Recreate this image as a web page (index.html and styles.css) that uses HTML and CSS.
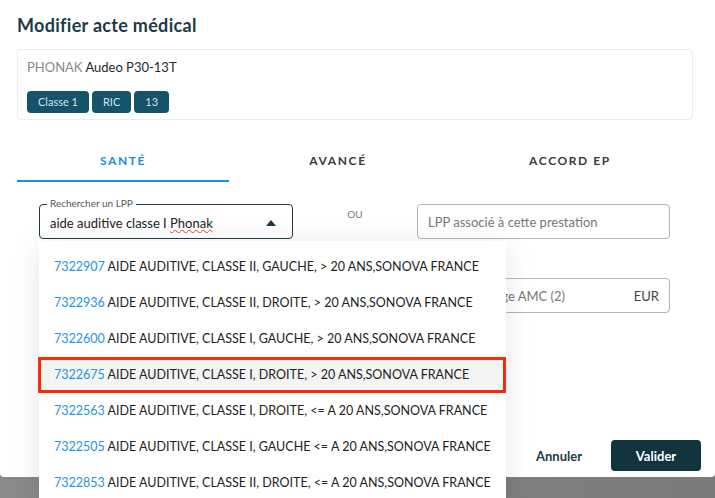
FILE: index.html
```html
<!DOCTYPE html>
<html lang="fr">
<head>
    <meta charset="UTF-8">
    <meta name="viewport" content="width=device-width, initial-scale=1.0">
    <title>Modifier acte médical</title>
    <link rel="stylesheet" href="styles.css">
</head>
<body>
    <div class="modal">
        <h1>Modifier acte médical</h1>

        <div class="produit">
            <div class="produit-nom"><span class="marque">PHONAK</span> Audeo P30-13T</div>
            <div class="chips">
                <span class="chip">Classe 1</span>
                <span class="chip">RIC</span>
                <span class="chip">13</span>
            </div>
        </div>

        <div class="tabs">
            <div class="tab actif">SANTÉ</div>
            <div class="tab">AVANCÉ</div>
            <div class="tab">ACCORD EP</div>
        </div>

        <div class="ligne">
            <div class="champ champ-recherche">
                <span class="champ-label">Rechercher un LPP</span>
                <span class="valeur">aide auditive classe I <span class="souligne">Phonak</span></span>
                <svg class="fleche" width="10" height="6" viewBox="0 0 10 6"><path d="M0 6 L5 0 L10 6 Z" fill="#1d3a46"/></svg>
            </div>
            <div class="ou">OU</div>
            <div class="champ"><span class="placeholder">LPP associé à cette prestation</span></div>
        </div>

        <div class="ligne ligne-2">
            <div class="champ"></div>
            <div class="ou"></div>
            <div class="champ"><span class="placeholder">Prise en charge AMC (2)</span><span class="unite">EUR</span></div>
        </div>

        <div class="actions">
            <button class="btn-annuler">Annuler</button>
            <button class="btn-valider">Valider</button>
        </div>

        <div class="liste">
            <div class="option"><span class="code">7322907</span> AIDE AUDITIVE, CLASSE II, GAUCHE, &gt; 20 ANS,SONOVA FRANCE</div>
            <div class="option"><span class="code">7322936</span> AIDE AUDITIVE, CLASSE II, DROITE, &gt; 20 ANS,SONOVA FRANCE</div>
            <div class="option"><span class="code">7322600</span> AIDE AUDITIVE, CLASSE I, GAUCHE, &gt; 20 ANS,SONOVA FRANCE</div>
            <div class="option selection"><span class="code">7322675</span> AIDE AUDITIVE, CLASSE I, DROITE, &gt; 20 ANS,SONOVA FRANCE</div>
            <div class="option"><span class="code">7322563</span> AIDE AUDITIVE, CLASSE I, DROITE, &lt;= A 20 ANS,SONOVA FRANCE</div>
            <div class="option"><span class="code">7322505</span> AIDE AUDITIVE, CLASSE I, GAUCHE &lt;= A 20 ANS,SONOVA FRANCE</div>
            <div class="option"><span class="code">7322853</span> AIDE AUDITIVE, CLASSE II, DROITE, &lt;= A 20 ANS,SONOVA FRANCE</div>
        </div>
    </div>
</body>
</html>
```

FILE: styles.css
```css
body {
    margin: 0;
    height: 498px;
    overflow: hidden;
    background: linear-gradient(90deg, #8a8a8a, #7a7a7a);
    font-family: Lato, "Noto Sans", sans-serif;
    color: #222;
}
.modal {
    position: relative;
    height: 477px;
    box-sizing: border-box;
    background: white;
    padding: 14px 22px 6px 17px;
    display: flex;
    flex-direction: column;
    border-radius: 0 0 4px 4px;
}
h1 {
    margin: 0;
    font-size: 18px;
    line-height: 22px;
    font-weight: 700;
    color: #1d3a46;
    letter-spacing: 0.3px;
}
.produit {
    margin-top: 13px;
    height: 71px;
    box-sizing: border-box;
    border: 1px solid #ececec;
    border-radius: 4px;
    padding: 8px 9px;
}
.produit-nom {
    font-size: 13px;
    line-height: 18px;
    color: #1d2a30;
}
.marque {
    color: #8a8a8a;
}
.chips {
    display: flex;
    gap: 3px;
    margin-top: 15px;
}
.chip {
    background: #14536a;
    color: #d3e2e8;
    font-size: 11px;
    line-height: 22px;
    height: 22px;
    padding: 0 11px;
    border-radius: 4px;
}
.tabs {
    display: grid;
    grid-template-columns: 212px 218px 1fr;
    margin-top: 20px;
}
.tab {
    text-align: center;
    font-size: 12px;
    font-weight: 700;
    letter-spacing: 1.6px;
    line-height: 14px;
    padding: 14px 0 12px;
    border-bottom: 2px solid transparent;
    color: #3a3a3a;
}
.tab.actif {
    color: #1a8edb;
    border-bottom-color: #1a8edb;
}
.ligne {
    display: grid;
    grid-template-columns: 254px 124px 253px;
    margin: 22px 0 0 22px;
}
.ligne-2 {
    margin-top: 39px;
}
.champ {
    position: relative;
    height: 35px;
    box-sizing: border-box;
    border: 1px solid #b4b4b4;
    border-radius: 4px;
    display: flex;
    align-items: center;
    padding: 0 10px;
    font-size: 13px;
}
.champ-recherche {
    border-color: #1d3a46;
    padding-top: 2px;
}
.champ-label {
    position: absolute;
    left: 7px;
    top: -9px;
    background: white;
    padding: 0 3px;
    font-size: 10px;
    line-height: 14px;
    color: #555;
}
.valeur {
    flex: 1;
    color: #222;
}
.souligne {
    text-decoration: underline wavy #e23b3b;
    text-decoration-thickness: 1px;
}
.fleche {
    margin-right: 6px;
}
.placeholder {
    flex: 1;
    color: #777;
}
.unite {
    color: #444;
}
.ou {
    text-align: center;
    font-size: 10px;
    color: #777;
    padding-top: 4px;
}
.actions {
    margin-top: auto;
    display: flex;
    justify-content: flex-end;
    align-items: center;
    gap: 12px;
    margin-right: -8px;
}
button {
    font-family: inherit;
    font-size: 13px;
    font-weight: 700;
    border: none;
    cursor: pointer;
    height: 31px;
    border-radius: 4px;
}
.btn-annuler {
    background: none;
    color: #1d3a46;
    padding: 0 17px;
}
.btn-valider {
    background: #12343f;
    color: white;
    width: 90px;
}
.liste {
    position: absolute;
    left: 39px;
    top: 241px;
    width: 467px;
    height: 270px;
    background: white;
    box-shadow: 0 4px 26px rgba(0, 0, 0, 0.1);
    padding-top: 8px;
    box-sizing: border-box;
}
.option {
    height: 36px;
    line-height: 36px;
    padding-left: 15px;
    font-size: 12.5px;
    color: #222;
    white-space: nowrap;
    box-sizing: border-box;
}
.option.selection {
    margin-left: -1px;
    padding-left: 13px;
    background: #f4f4f4;
    border: 3px solid #fa2a0a;
    line-height: 30px;
}
.code {
    color: #1e95e0;
}
```
